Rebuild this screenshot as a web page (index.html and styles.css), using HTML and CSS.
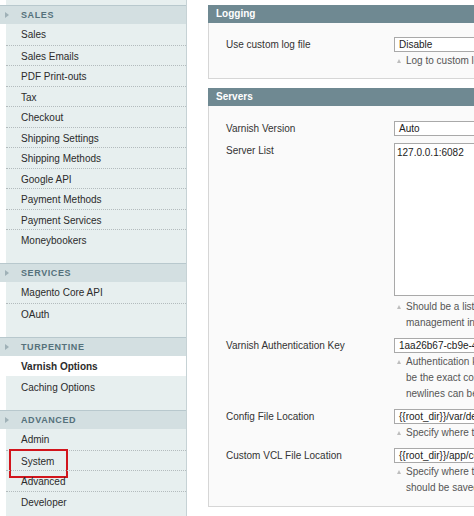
FILE: index.html
```html
<!DOCTYPE html>
<html lang="en">
<head>
<meta charset="utf-8">
<title>Turpentine - Varnish Options</title>
<link rel="stylesheet" href="styles.css">
</head>
<body>
<div class="page">
  <aside class="side">
    <div class="side-top"></div>
    <div class="group">
      <div class="group-head">Sales</div>
      <ul class="group-items">
        <li>Sales</li>
        <li>Sales Emails</li>
        <li>PDF Print-outs</li>
        <li>Tax</li>
        <li>Checkout</li>
        <li>Shipping Settings</li>
        <li>Shipping Methods</li>
        <li>Google API</li>
        <li>Payment Methods</li>
        <li>Payment Services</li>
        <li>Moneybookers</li>
      </ul>
    </div>
    <div class="group">
      <div class="group-head">Services</div>
      <ul class="group-items">
        <li>Magento Core API</li>
        <li>OAuth</li>
      </ul>
    </div>
    <div class="group">
      <div class="group-head">Turpentine</div>
      <ul class="group-items">
        <li class="active">Varnish Options</li>
        <li>Caching Options</li>
      </ul>
    </div>
    <div class="group">
      <div class="group-head">Advanced</div>
      <ul class="group-items">
        <li>Admin</li>
        <li class="marked">System<span class="mark"></span></li>
        <li>Advanced</li>
        <li>Developer</li>
      </ul>
    </div>
  </aside>

  <main class="main">
    <section class="box">
      <h2 class="box-head">Logging</h2>
      <div class="box-body">
        <div class="row">
          <div class="label">Use custom log file</div>
          <div class="value">
            <div class="field">Disable</div>
            <div class="note">Log to custom log file instead of system.log</div>
          </div>
        </div>
      </div>
    </section>

    <section class="box">
      <h2 class="box-head">Servers</h2>
      <div class="box-body">
        <div class="row">
          <div class="label">Varnish Version</div>
          <div class="value"><div class="field">Auto</div></div>
        </div>
        <div class="row">
          <div class="label">Server List</div>
          <div class="value">
            <div class="field area">127.0.0.1:6082</div>
            <div class="note">Should be a list of Varnish servers with the<br>management interface port, one per line</div>
          </div>
        </div>
        <div class="row">
          <div class="label">Varnish Authentication Key</div>
          <div class="value">
            <div class="field">1aa26b67-cb9e-4c2a-9d3f-7e1b2a6c8f90</div>
            <div class="note">Authentication key for the management interface. Must<br>be the exact contents of the secret file; trailing<br>newlines can be significant</div>
          </div>
        </div>
        <div class="row">
          <div class="label">Config File Location</div>
          <div class="value">
            <div class="field">{{root_dir}}/var/default.vcl</div>
            <div class="note">Specify where the generated VCL should be saved</div>
          </div>
        </div>
        <div class="row">
          <div class="label">Custom VCL File Location</div>
          <div class="value">
            <div class="field">{{root_dir}}/app/code/community/custom.vcl</div>
            <div class="note">Specify where the custom VCL include file<br>should be saved</div>
          </div>
        </div>
      </div>
    </section>
  </main>
</div>
</body>
</html>
```

FILE: styles.css
```css
html, body {
  margin: 0;
  padding: 0;
  overflow: hidden;
  background: #ffffff;
}

body {
  font-family: "Liberation Sans", Arial, sans-serif;
  font-size: 10px;
  color: #2b2b2b;
}

.page {
  display: flex;
  gap: 21px;
  width: max-content;
}

/* ---------- sidebar ---------- */
.side {
  flex: none;
  width: 186px;
  border-right: 1px solid #c6d2d5;
}

.side-top {
  height: 5px;
  margin-left: 6px;
  background: #e7efef;
}

.group-head {
  position: relative;
  height: 18px;
  line-height: 18px;
  border-top: 1px solid #b8c8cd;
  background: #d3dfe1;
  padding-left: 21px;
  font-size: 9px;
  font-weight: bold;
  letter-spacing: 0.6px;
  text-transform: uppercase;
  color: #55717b;
}

.group-head::before {
  content: "";
  position: absolute;
  left: 5px;
  top: 6px;
  border-left: 4px solid #9fb1b7;
  border-top: 3.5px solid transparent;
  border-bottom: 3.5px solid transparent;
}

.group-items {
  list-style: none;
  margin: 0 0 0 6px;
  padding: 0 0 13.5px;
  background: #e7efef;
}

.group-items li {
  position: relative;
  box-sizing: border-box;
  height: 20.5px;
  line-height: 21px;
  padding-left: 15px;
}

.group-items li + li {
  border-top: 1px dotted #b3bbbd;
}

.group-items li.active {
  background: #ffffff;
  font-weight: bold;
}

.group-items li.active + li {
  border-top-color: transparent;
}

.mark {
  position: absolute;
  left: 3px;
  top: -2px;
  width: 59px;
  height: 29px;
  box-sizing: border-box;
  border: 2px solid #d2151c;
}

/* ---------- main ---------- */
.main {
  flex: none;
  width: 330px;
  padding-top: 5px;
}

.box + .box {
  margin-top: 9px;
}

.box-head {
  margin: 0;
  height: 18px;
  line-height: 18px;
  padding-left: 8px;
  background: #6f8992;
  color: #ffffff;
  font-size: 10px;
  font-weight: bold;
}

.box-body {
  background: #fafafa;
  border: 1px solid #d6d6d6;
  border-top: 0;
  padding: 14px 0 9px;
}

.box + .box .box-body {
  padding: 15px 0 10px;
}

.row {
  display: flex;
}

.row + .row {
  margin-top: 7px;
}

.label {
  box-sizing: border-box;
  width: 185px;
  flex: none;
  padding-left: 17px;
  line-height: 15px;
  color: #333333;
}

.value {
  flex: none;
  width: 140px;
}

.field {
  box-sizing: border-box;
  width: 300px;
  height: 15px;
  line-height: 13px;
  padding-left: 4px;
  border: 1px solid #a9a9a9;
  background: #ffffff;
  color: #222222;
  white-space: nowrap;
  overflow: hidden;
}

.field.area {
  height: 153px;
  padding-top: 2px;
  padding-left: 2px;
  margin-bottom: 3px;
}

.note {
  position: relative;
  margin-top: 1px;
  padding-left: 12px;
  line-height: 16px;
  color: #555555;
  white-space: nowrap;
}

.note::before {
  content: "";
  position: absolute;
  left: 3px;
  top: 6px;
  border-bottom: 4px solid #bdbdbd;
  border-left: 2.5px solid transparent;
  border-right: 2.5px solid transparent;
}
```
